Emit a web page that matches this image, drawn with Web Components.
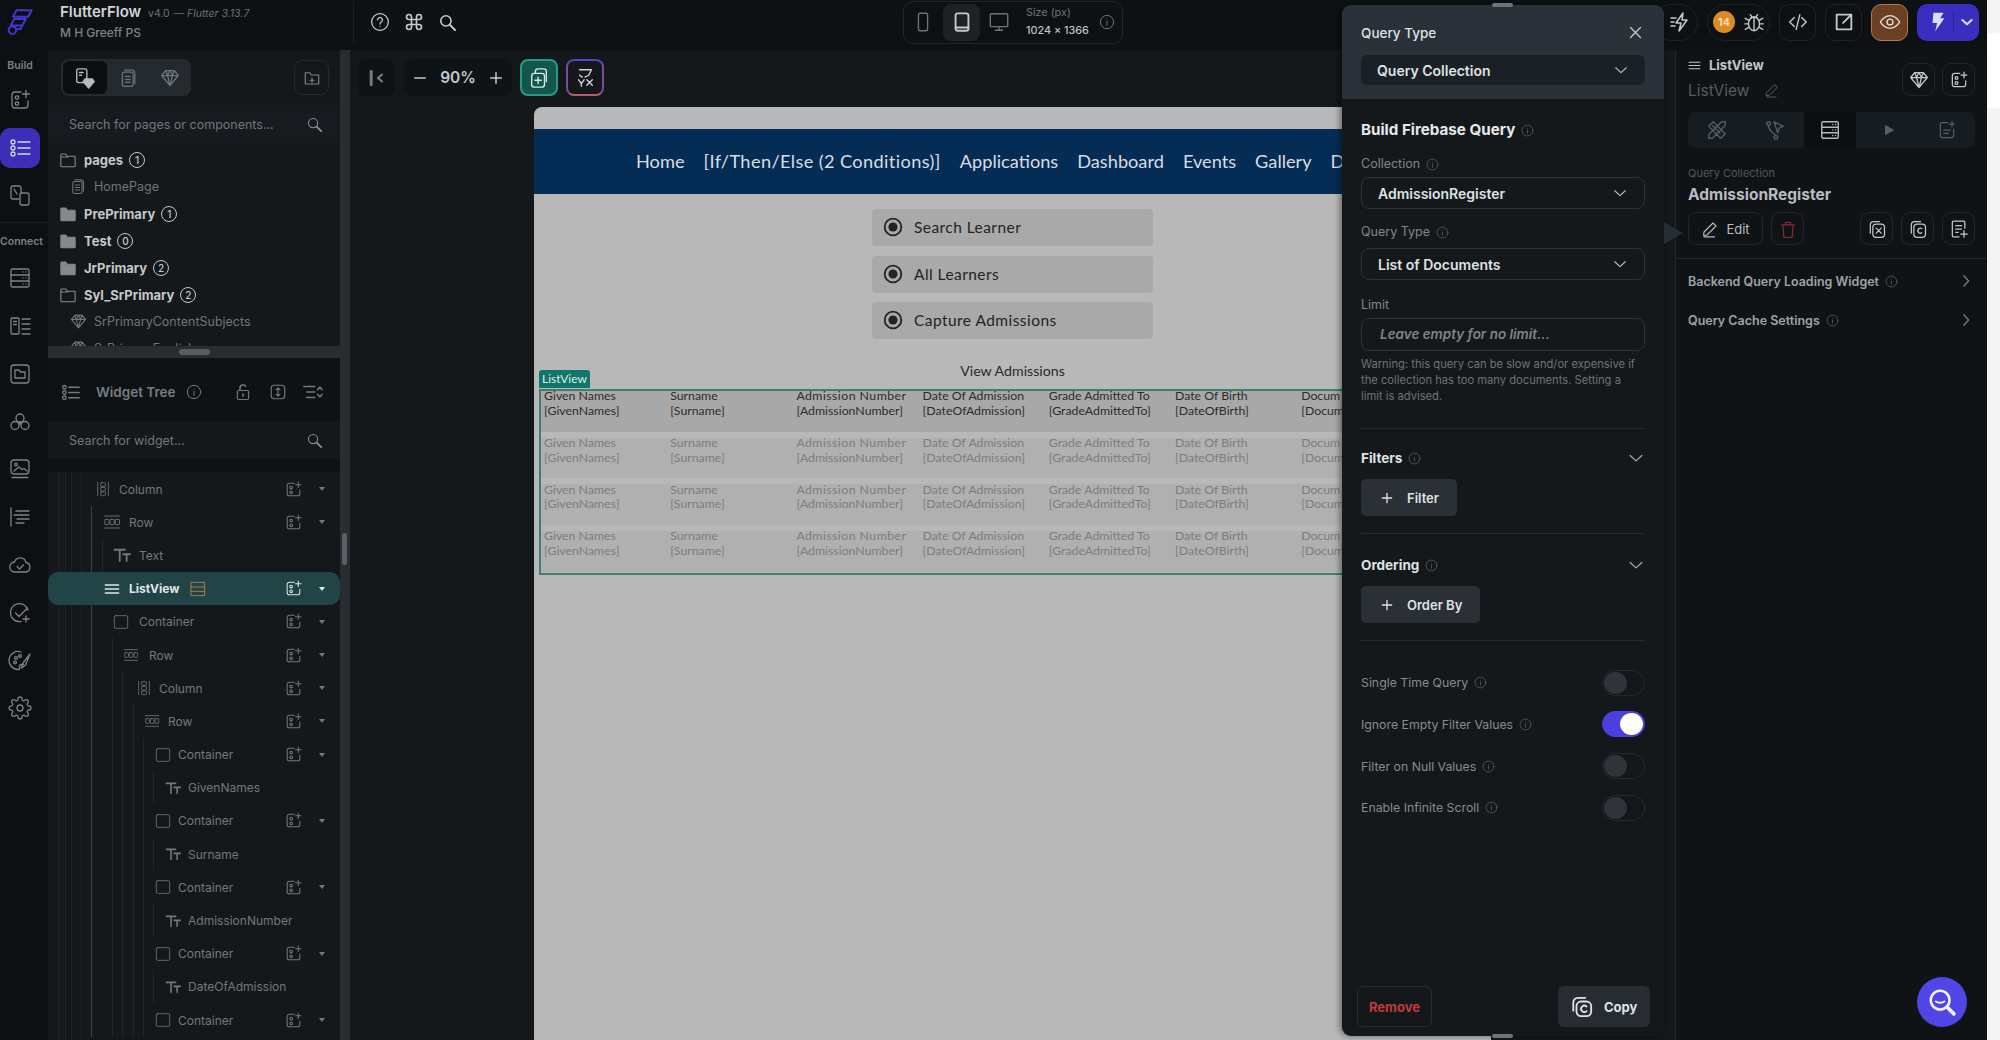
<!DOCTYPE html>
<html>
<head>
<meta charset="utf-8">
<title>FlutterFlow</title>
<style>
  html, body { margin: 0; height: 100%; overflow: hidden; }
  body { display: flex; font-family: "Inter", "Liberation Sans", sans-serif; background: #f4f4f4; }
</style>
</head>
<body>
<ff-app>
  <ff-rail slot="rail"></ff-rail>
  <ff-topbar slot="topbar"></ff-topbar>
  <ff-left slot="left"></ff-left>
  <ff-canvas slot="canvas"></ff-canvas>
  <ff-props slot="props"></ff-props>
  <ff-query slot="overlay"></ff-query>
  <ff-fab slot="overlay"></ff-fab>
</ff-app>
<ff-edge></ff-edge>

<script>
const ICONS = {
  add: '<path d="M13 4H7a3 3 0 0 0-3 3v10a3 3 0 0 0 3 3h10a3 3 0 0 0 3-3v-4"/><circle cx="9" cy="9.5" r="1.7"/><circle cx="9" cy="15.5" r="1.7"/><path d="M18 2.5v7M14.5 6h7"/>',
  list: '<circle cx="5" cy="6" r="2"/><circle cx="5" cy="12" r="2"/><circle cx="5" cy="18" r="2"/><path d="M10 6h12M10 12h12M10 18h12"/>',
  responsive: '<path d="M11 16H5a2 2 0 0 1-2-2V5a2 2 0 0 1 2-2h6a2 2 0 0 1 2 2v5"/><rect x="12" y="10" width="9" height="12" rx="2"/><path d="M6 6l3 5"/>',
  server: '<rect x="3" y="3" width="18" height="18" rx="1.5"/><path d="M3 9h18M3 15h18M15 6h.01M18 6h.01M15 12h.01M18 12h.01M15 18h.01M18 18h.01"/>',
  listpage: '<rect x="3" y="4" width="8" height="16" rx="1"/><path d="M5.500 7.500h3M5.500 10.500h3M14 5h8M14 10h8M14 15h8M14 20h8"/>',
  folderbox: '<rect x="3" y="3" width="18" height="18" rx="3"/><path d="M7 8h4l1.500 2H17v6H7z"/>',
  comps: '<circle cx="12" cy="8" r="4"/><circle cx="7" cy="15.500" r="4"/><circle cx="17" cy="15.500" r="4"/><circle cx="12" cy="13" r="1"/>',
  media: '<rect x="3" y="3" width="18" height="14" rx="3"/><circle cx="8" cy="7.500" r="1.300"/><path d="M6 14l5-4 3 2.500 2-1 3 2.500M4 20.500h16"/>',
  textlines: '<path d="M3 3v18M8 6h13M6 10h15M9 14h12M8 18h8"/>',
  cloud: '<path d="M7 19a5 5 0 0 1-.5-10A6 6 0 0 1 18 9.500a4.800 4.800 0 0 1-.5 9.500z"/><path d="M9 13.500l2.500 2.500 4-4"/>',
  checkplus: '<path d="M20 9A9 9 0 1 0 13 20.500"/><path d="M7.500 12l3.500 3.500 8-8M18 15v6M15 18h6"/>',
  palette: '<path d="M13 3a9 9 0 1 0-3 17.500c2 .2 2-1.500 1.500-2.500s.5-2.500 2-2.500h2"/><circle cx="8" cy="9" r="1.400"/><circle cx="12" cy="7" r="1.400"/><circle cx="7" cy="13.500" r="1.400"/><path d="M22 5l-7 9-1.500 5 4-3z"/>',
  gear: '<circle cx="12" cy="12" r="3"/><path d="M19.4 15a1.65 1.65 0 0 0 .33 1.82l.06.06a2 2 0 0 1 0 2.83 2 2 0 0 1-2.83 0l-.06-.06a1.65 1.65 0 0 0-1.82-.33 1.65 1.65 0 0 0-1 1.51V21a2 2 0 0 1-2 2 2 2 0 0 1-2-2v-.09A1.65 1.65 0 0 0 9 19.4a1.65 1.65 0 0 0-1.82.33l-.06.06a2 2 0 0 1-2.83 0 2 2 0 0 1 0-2.83l.06-.06a1.65 1.65 0 0 0 .33-1.82 1.65 1.65 0 0 0-1.51-1H3a2 2 0 0 1-2-2 2 2 0 0 1 2-2h.09A1.65 1.65 0 0 0 4.6 9a1.65 1.65 0 0 0-.33-1.82l-.06-.06a2 2 0 0 1 0-2.83 2 2 0 0 1 2.83 0l.06.06a1.65 1.65 0 0 0 1.82.33H9a1.65 1.65 0 0 0 1-1.51V3a2 2 0 0 1 2-2 2 2 0 0 1 2 2v.09a1.65 1.65 0 0 0 1 1.51 1.65 1.65 0 0 0 1.82-.33l.06-.06a2 2 0 0 1 2.83 0 2 2 0 0 1 0 2.83l-.06.06a1.65 1.65 0 0 0-.33 1.82V9a1.65 1.65 0 0 0 1.51 1H21a2 2 0 0 1 2 2 2 2 0 0 1-2 2h-.09a1.65 1.65 0 0 0-1.51 1z"/>',
  logo: '<path d="M9 2h13l-3 5.500H6zM7 9.500h10L14 15H4z"/><circle cx="5.500" cy="19" r="3.200"/><path d="M8.500 18h4l1.500-3"/>',
  help: '<circle cx="12" cy="12" r="10"/><path d="M9 9.500a3 3 0 1 1 4.500 2.600c-1 .6-1.500 1.200-1.500 2.400M12 17.500h.01"/>',
  cmd: '<path d="M9 9h6v6H9zM9 9V6a3 3 0 1 0-3 3zM15 9h3a3 3 0 1 0-3-3zM15 15v3a3 3 0 1 0 3-3zM9 15H6a3 3 0 1 0 3 3z"/>',
  search: '<circle cx="10" cy="10" r="6.500"/><path d="M15 15l6.500 6.500" stroke-width="2.500"/>',
  phone: '<rect x="7" y="2.500" width="10" height="19" rx="2"/>',
  tablet: '<rect x="5" y="2.500" width="14" height="19" rx="2.500"/><path d="M5 18h14"/>',
  desktop: '<rect x="2.500" y="3" width="19" height="14" rx="1"/><path d="M12 17v4M8 21h8"/>',
  info: '<circle cx="12" cy="12" r="10"/><path d="M12 11v6M12 7.500h.01"/>',
  collapse: '<path d="M5 4v16" stroke-width="3.500"/><path d="M18 8l-5 4 5 4" stroke-width="2.500"/>',
  minus: '<path d="M5 12h14" stroke-width="2"/>',
  plus: '<path d="M12 5v14M5 12h14" stroke-width="2"/>',
  addpage: '<rect x="4" y="7" width="14" height="15" rx="3"/><path d="M8 7V5a3 3 0 0 1 3-3h6a3 3 0 0 1 3 3v11M11 11v7M7.500 14.500h7"/>',
  aifx: '<path d="M6 3h13l-3 6-4 2M5 14l3 4 3-4M8 18v3M14 14l6 6M20 14l-6 6M6 9l3 2"/>',
  pagedia: '<rect x="3" y="2" width="11" height="15" rx="2"/><path d="M6 6h4M6 9h2"/><path d="M12 13h8l2 3-6 7-6-7z" fill="currentColor"/>',
  pages: '<rect x="4" y="5" width="13" height="17" rx="2.500"/><path d="M7 2.500h8a4 4 0 0 1 4 4v12M7.500 10h6M7.500 13.500h6M7.500 17h6"/>',
  diamond: '<path d="M7 3h10l5 6-10 12L2 9zM2 9h20M9 9l3 12 3-12M7 3l2 6 3-6 3 6 2-6"/>',
  folderadd: '<path d="M3 5h6l2 3h10v12H3zM12 12v6M9 15h6"/>',
  folder: '<path d="M2.500 5a1 1 0 0 1 1-1h5.500l2 3h9.500a1 1 0 0 1 1 1v12a1 1 0 0 1-1 1h-17a1 1 0 0 1-1-1zM2.500 8h9"/>',
  folderfill: '<path d="M2.500 5a1 1 0 0 1 1-1h5.500l2 3h9.500a1 1 0 0 1 1 1v12a1 1 0 0 1-1 1h-17a1 1 0 0 1-1-1z" fill="currentColor"/>',
  lock: '<rect x="4.500" y="10" width="15" height="12" rx="2"/><path d="M8 10V6.500a4 4 0 0 1 7.500-2M12 14.500v3" stroke-width="2"/>',
  expand: '<rect x="3" y="3" width="18" height="18" rx="4"/><path d="M12 6.500v11M9.500 9l2.500-2.500L14.500 9M9.500 15l2.500 2.500 2.500-2.500"/>',
  sortlines: '<path d="M2 6h12M5 12h9M5 18h9M17 9.500l2.500-3 2.500 3M17 14.500l2.500 3 2.500-3"/>',
  row: '<path d="M2 4h20M2 20h20"/><rect x="2.500" y="8.500" width="5.500" height="7" rx="1"/><rect x="9.500" y="8.500" width="5.500" height="7" rx="1"/><rect x="16.500" y="8.500" width="5.500" height="7" rx="1"/>',
  column: '<path d="M4 2v20M20 2v20"/><rect x="8.500" y="2.500" width="7" height="5.500" rx="1"/><rect x="8.500" y="9.500" width="7" height="5.500" rx="1"/><rect x="8.500" y="16.500" width="7" height="5.500" rx="1"/>',
  tt: '<path d="M2 5h14M9 5v15M13.500 11H23M18.200 11v9" stroke-width="2.400"/>',
  box: '<rect x="2" y="2.500" width="20" height="19" rx="2"/>',
  menu: '<path d="M2 6h20M2 12h20M2 18h20" stroke-width="2.200"/>',
  table: '<rect x="2" y="2" width="20" height="20"/><path d="M2 9h20M2 15.500h20"/>',
  close: '<path d="M5 5l14 14M19 5L5 19" stroke-width="1.800"/>',
  chevdown: '<path d="M5 9l7 6.500L19 9"/>',
  chevright: '<path d="M9 5l6.500 7L9 19"/>',
  boldchev: '<path d="M5 9l7 6.500L19 9" stroke-width="3"/>',
  flash: '<path d="M14 3L7 13h5l-2 8 8-11h-5zM2 8h5M2 12h3M2 16h4"/>',
  bug: '<ellipse cx="12" cy="14" rx="6" ry="7.500"/><path d="M12 6.500V21M8 4l2 3M16 4l-2 3M6 10L2.500 8M18 10l3.500-2M6 14H2M18 14h4M6 18l-3.500 2M18 18l3.500 2M9 7h6"/>',
  code: '<path d="M8 7l-5 5 5 5M16 7l5 5-5 5M14 4l-4 16"/>',
  launch: '<path d="M13 4H4v16h16v-9M11 13l9-9M14 4h6v6" stroke-width="2"/>',
  eye: '<path d="M1.500 12S5.500 5 12 5s10.500 7 10.500 7-4 7-10.500 7S1.500 12 1.500 12z"/><circle cx="12" cy="12" r="3.200"/>',
  bolt: '<path d="M7 2h11l-3.500 6H19L9 22l2-9H6z" fill="currentColor" stroke="none"/>',
  pencil: '<path d="M4 16L16 4l4 4L8 20l-4.500.5zM4 22.500h14"/>',
  trash: '<path d="M4 7h16M9 7V4h6v3M6 7l1 15h10l1-15"/>',
  copyx: '<rect x="7" y="6" width="14" height="16" rx="4"/><path d="M4 17V7a4 4 0 0 1 4-4h7M11 11l6 6M17 11l-6 6"/>',
  copyc: '<rect x="7" y="6" width="14" height="16" rx="4"/><path d="M4 17V7a4 4 0 0 1 4-4h7M16.500 11.500a3 3 0 1 0 0 5"/>',
  docadd: '<path d="M19 11V4a1.500 1.500 0 0 0-1.500-1.500h-12A1.500 1.500 0 0 0 4 4v16a1.500 1.500 0 0 0 1.500 1.500H12M8 8h7M8 12h7M8 16h3M18 14v8M14 18h8"/>',
  tools: '<path d="M3 8l5-5 13 13-5 5zM7 7l2 2M10 10l2 2M13 13l2 2M21 3h-4L3 17v4h4L21 7z"/>',
  flow: '<circle cx="5" cy="5" r="2"/><circle cx="13" cy="20" r="2"/><path d="M5 7c0 6 4 7 8 11M11 3l10 5-4.500 2L15 15z"/>',
  play: '<path d="M6 4l14 8-14 8z" fill="currentColor" stroke="none"/>',
  noteadd: '<path d="M13 3H6a2 2 0 0 0-2 2v14a2 2 0 0 0 2 2h12a2 2 0 0 0 2-2v-8M8 12h8M8 16h6M18 2v6M15 5h6"/>',
  copy: '<rect x="6" y="6" width="16" height="16" rx="5" stroke-width="2"/><path d="M2.500 16V7a5 5 0 0 1 5-5h8M17 11.500a3.500 3.500 0 1 0 0 5" stroke-width="2"/>',
  sw: '<circle cx="10.500" cy="10.500" r="7.500" stroke-width="2"/><path d="M16 16l5.500 5.500" stroke-width="3"/><path d="M7 11.500c1.500 1.500 5.500 1.500 7 0"/>',
  radio: '<circle cx="12" cy="12" r="10" stroke-width="2.200"/><circle cx="12" cy="12" r="5.500" fill="currentColor" stroke="none"/>'
};

// --- small pieces --------------------------------------------------------

customElements.define('ff-icon', class FfIcon extends HTMLElement {
  connectedCallback() {
    const size = this.getAttribute('size') || 20;
    const width = this.getAttribute('stroke') || 1.5;
    this.attachShadow({ mode: 'open' }).innerHTML = `
      <style>:host { display: inline-flex; flex: none; width: ${size}px; height: ${size}px; } svg { width: 100%; height: 100%; }</style>
      <svg viewBox="0 0 24 24" fill="none" stroke="currentColor" stroke-width="${width}" stroke-linecap="round" stroke-linejoin="round">${ICONS[this.getAttribute('name')] || ''}</svg>`;
  }
});

customElements.define('ff-edge', class FfEdge extends HTMLElement {
  constructor() {
    super();
    this.attachShadow({ mode: 'open' }).innerHTML = `
      <style>
        :host { display: flex; flex-direction: column; flex: none; width: 13px; height: 1040px; background: #f4f4f4; }
        .a { height: 33px; } .b { height: 5px; background: #fff; } .c { height: 70px; background: #fff; }
      </style>
      <div class="a"></div><div class="b"></div><div class="c"></div>`;
  }
});

customElements.define('ff-app', class FfApp extends HTMLElement {
  constructor() {
    super();
    this.attachShadow({ mode: 'open' }).innerHTML = `
      <style>
        :host {
          display: grid;
          position: relative;
          flex: none;
          width: 1987px;
          height: 1040px;
          overflow: hidden;
          background: #14181b;
          grid-template-columns: 48px 302px 1fr 323px;
          grid-template-rows: 50px 1fr;
        }
        ::slotted([slot=rail]) { grid-row: 1 / 3; grid-column: 1; }
        ::slotted([slot=topbar]) { grid-row: 1; grid-column: 2 / 5; }
        ::slotted([slot=left]) { grid-row: 2; grid-column: 2; }
        ::slotted([slot=canvas]) { grid-row: 2; grid-column: 3; }
        ::slotted([slot=props]) { grid-row: 2; grid-column: 4; }
      </style>
      <slot name="rail"></slot><slot name="topbar"></slot><slot name="left"></slot>
      <slot name="canvas"></slot><slot name="props"></slot><slot name="overlay"></slot>`;
  }
});

customElements.define('ff-rail', class FfRail extends HTMLElement {
  constructor() {
    super();
    const item = (name, on) => `<div class="item"><div class="${on ? 'on' : ''}"><ff-icon name="${name}" size="24" stroke="1.300"></ff-icon></div></div>`;
    this.attachShadow({ mode: 'open' }).innerHTML = `
      <style>
        :host { display: flex; flex-direction: column; align-items: flex-start; background: #0c1013; color: #7d8387; min-height: 0; overflow: hidden; }
        .logo { height: 44px; margin-bottom: 6px; width: 40px; display: flex; align-items: center; justify-content: center; color: #4237c9; }
        .cap { width: 40px; text-align: center; font: 600 10.5px/14px "Inter", sans-serif; color: #7a8085; }
        .build { margin-top: 9px; margin-bottom: 3px; }
        .connect { margin-top: 12px; margin-bottom: 5px; }
        .item { width: 100%; height: 47.8px; display: flex; align-items: center; flex: none; }
        .item > div { width: 40px; height: 40px; display: flex; align-items: center; justify-content: center; border-radius: 10px; }
        .item > div.on { background: #3e2fb8; color: #d6d8dc; }
        hr { width: 100%; margin: 3px 0 0; border: 0; border-top: 1px solid #1b2024; }
      </style>
      <div class="logo"><ff-icon name="logo" size="28" stroke="1.700"></ff-icon></div>
      <div class="cap build">Build</div>
      ${item('add')}${item('list', true)}${item('responsive')}
      <hr>
      <div class="cap connect">Connect</div>
      ${['server', 'listpage', 'folderbox', 'comps', 'media', 'textlines', 'cloud', 'checkplus', 'palette', 'gear'].map(n => item(n)).join('')}`;
  }
});

customElements.define('ff-topbar', class FfTopbar extends HTMLElement {
  constructor() {
    super();
    const btn = (name, cls) => `<div class="btn ${cls || ''}"><ff-icon name="${name}" size="22"></ff-icon></div>`;
    this.attachShadow({ mode: 'open' }).innerHTML = `
      <style>
        :host { display: flex; align-items: center; box-sizing: border-box; padding-bottom: 6px; background: #0d1114; color: #b9bdc1; font-family: "Inter", sans-serif; }
        .brand { width: 306px; box-sizing: border-box; height: 42px; padding-left: 12px; border-right: 1px solid #1a1f23; display: flex; flex-direction: column; justify-content: center; gap: 4px; flex: none; }
        .name { font-size: 15px; line-height: 16px; font-weight: 600; color: #d2d5d8; white-space: nowrap; }
        .name span { font-size: 10.5px; font-weight: 400; color: #6a7075; margin-left: 3px; }
        .name i { font-size: 10.5px; font-weight: 400; color: #6a7075; }
        .org { font-size: 12px; line-height: 14px; font-weight: 500; color: #7d8387; }
        .tools { display: flex; gap: 14px; margin-left: 16px; align-items: center; color: #c6c9cc; flex: none; }
        .device { margin-left: 446px; width: 220px; height: 43px; box-sizing: border-box; border: 1px solid #20262a; border-radius: 10px; display: flex; align-items: center; padding-left: 8px; flex: none; color: #6d7378; }
        .slot { width: 37px; height: 37px; display: flex; align-items: center; justify-content: center; border-radius: 8px; flex: none; }
        .slot.first { width: 22px; margin-right: 9px; }
        .slot.on { background: #1c2226; color: #c9ccce; }
        .slot.last { width: 30px; margin: 0 12px 0 4px; }
        .size { font-size: 10.8px; line-height: 18px; color: #6d7378; white-space: nowrap; }
        .size b { display: block; font-weight: 500; color: #bfc3c6; }
        .info { margin-left: 10px; }
        .right { margin-left: auto; margin-right: 8px; display: flex; align-items: center; gap: 9px; flex: none; }
        .btn { width: 37px; height: 37px; box-sizing: border-box; border: 1px solid #1e2327; border-radius: 10px; display: flex; align-items: center; justify-content: center; color: #c6c9cc; }
        .pill { display: flex; align-items: center; height: 37px; box-sizing: border-box; border: 1px solid #1e2327; border-radius: 19px; color: #c6c9cc; }
        .flash { width: 46px; padding-left: 16px; }
        .debug { width: 63px; padding-left: 5px; gap: 8px; }
        .badge { width: 22px; height: 22px; border-radius: 50%; background: #de8c22; color: #f6e3c2; font-size: 11px; font-weight: 600; display: flex; align-items: center; justify-content: center; flex: none; }
        .eye { background: #6a3f24; border-color: #b07a52; color: #e2e0de; }
        .run { width: 62px; height: 37px; background: #3a2ec0; border-radius: 10px; display: flex; align-items: center; color: #dcdcf5; }
        .run div { width: 36px; display: flex; justify-content: center; border-right: 1px solid #2a2190; }
        .run ff-icon:last-child { margin-left: 5px; }
      </style>
      <div class="brand">
        <div class="name">FlutterFlow <span>v4.0</span> <i>— Flutter 3.13.7</i></div>
        <div class="org">M H Greeff PS</div>
      </div>
      <div class="tools">
        <ff-icon name="help" size="20"></ff-icon><ff-icon name="cmd" size="20" stroke="2"></ff-icon><ff-icon name="search" size="19" stroke="2"></ff-icon>
      </div>
      <div class="device">
        <div class="slot first"><ff-icon name="phone" size="22"></ff-icon></div>
        <div class="slot on"><ff-icon name="tablet" size="22" stroke="2"></ff-icon></div>
        <div class="slot last"><ff-icon name="desktop" size="22"></ff-icon></div>
        <div class="size">Size (px)<b>1024 × 1366</b></div>
        <ff-icon class="info" name="info" size="16"></ff-icon>
      </div>
      <div class="right">
        <div class="pill flash"><ff-icon name="flash" size="24"></ff-icon></div>
        <div class="pill debug"><div class="badge">14</div><ff-icon name="bug" size="22"></ff-icon></div>
        ${btn('code')}${btn('launch')}${btn('eye', 'eye')}
        <div class="run"><div><ff-icon name="bolt" size="22"></ff-icon></div><ff-icon name="boldchev" size="16"></ff-icon></div>
      </div>`;
  }
});

customElements.define('ff-page-row', class FfPageRow extends HTMLElement {
  connectedCallback() {
    const count = this.getAttribute('count');
    const child = this.hasAttribute('child');
    this.attachShadow({ mode: 'open' }).innerHTML = `
      <style>
        :host { display: flex; align-items: center; height: 27px; flex: none; padding-left: ${child ? 22 : 11}px; color: ${child ? '#6f757a' : '#83898d'}; }
        .label { margin-left: 7px; font: ${child ? '400 12.5px' : '700 13px'} "Inter", sans-serif; color: ${child ? '#6f757a' : '#c4c8cb'}; }
        .n { margin-left: 6px; width: 14px; height: 14px; border: 1px solid #c4c8cb; border-radius: 50%; font: 500 10px/14px "Inter", sans-serif; color: #c4c8cb; text-align: center; }
      </style>
      <ff-icon name="${this.getAttribute('icon')}" size="${child ? 17 : 18}"></ff-icon>
      <span class="label">${this.getAttribute('label')}</span>
      ${count !== null ? `<span class="n">${count}</span>` : ''}`;
  }
});

customElements.define('ff-tree-row', class FfTreeRow extends HTMLElement {
  connectedCallback() {
    const x = +this.getAttribute('x');
    const lx = +this.getAttribute('lx');
    const on = this.hasAttribute('selected');
    const lines = (this.getAttribute('lines') || '').split(' ').filter(Boolean).map(Number);
    const bg = lines.map(l => {
      const c = l === 91 ? '#3a4045' : '#20262a';
      return `linear-gradient(${c},${c}) ${l - 48}px 0/1px 100% no-repeat`;
    }).join(',');
    this.attachShadow({ mode: 'open' }).innerHTML = `
      <style>
        :host { display: flex; align-items: center; height: 33.2px; flex: none; box-sizing: border-box; padding-left: ${x - 48}px; color: #72787d; font: 400 12px "Inter", sans-serif; ${bg ? 'background:' + bg + ';' : ''} }
        :host([selected]) { background: #214447; border-radius: 10px; color: #e4e6e8; font-weight: 700; }
        .ic { width: ${lx - x}px; flex: none; display: flex; }
        .label { white-space: nowrap; }
        .table { margin-left: 10px; color: #c98a50; }
        .right { margin-left: auto; display: flex; align-items: center; padding-right: 15px; }
        .caret { margin-left: 16px; width: 0; height: 0; border: 3.5px solid transparent; border-top: 4px solid currentColor; border-bottom: 0; }
      </style>
      <div class="ic"><ff-icon name="${this.getAttribute('icon')}" size="${this.getAttribute('size') || 16}" stroke="1.200"></ff-icon></div>
      <span class="label">${this.getAttribute('label')}</span>
      ${on ? '<ff-icon class="table" name="table" size="16" stroke="1.200"></ff-icon>' : ''}
      ${this.hasAttribute('leaf') ? '' : '<div class="right"><ff-icon name="add" size="19" stroke="1.300"></ff-icon><div class="caret"></div></div>'}`;
  }
});

customElements.define('ff-left', class FfLeft extends HTMLElement {
  constructor() {
    super();
    const pageRows = [
      ['folder', 'pages', 1], ['pages', 'HomePage', null, 1], ['folderfill', 'PrePrimary', 1], ['folderfill', 'Test', 0],
      ['folderfill', 'JrPrimary', 2], ['folder', 'Syl_SrPrimary', 2], ['diamond', 'SrPrimaryContentSubjects', null, 1], ['diamond', 'SrPrimaryEnglish', null, 1]
    ].map(r => `<ff-page-row icon="${r[0]}" label="${r[1]}" ${r[2] !== null && r[2] !== undefined ? `count="${r[2]}"` : ''} ${r[3] ? 'child' : ''}></ff-page-row>`).join('');
    const L = '91 112 122 133 143';
    const cols = [
      ['column', 'Column', 95, 119, ''], ['row', 'Row', 103, 129, '91', 18], ['tt', 'Text', 113, 139, '91 102', 18, 'leaf'],
      ['menu', 'ListView', 104, 129, '', 16, 'selected'], ['box', 'Container', 113, 139, '91'], ['row', 'Row', 123, 149, '91 112'],
      ['column', 'Column', 136, 159, '91 112 122'], ['row', 'Row', 144, 168, '91 112 122 133'], ['box', 'Container', 155, 178, L],
      ['tt', 'GivenNames', 165, 188, L + ' 153', 16, 'leaf'], ['box', 'Container', 155, 178, L],
      ['tt', 'Surname', 165, 188, L + ' 153', 16, 'leaf'], ['box', 'Container', 155, 178, L],
      ['tt', 'AdmissionNumber', 165, 188, L + ' 153', 16, 'leaf'], ['box', 'Container', 155, 178, L],
      ['tt', 'DateOfAdmission', 165, 188, L + ' 153', 16, 'leaf'], ['box', 'Container', 155, 178, L]
    ].map(r => `<ff-tree-row icon="${r[0]}" label="${r[1]}" x="${r[2]}" lx="${r[3]}" lines="${r[4]}" size="${r[5] || 16}" ${r[6] || ''}></ff-tree-row>`).join('');
    this.attachShadow({ mode: 'open' }).innerHTML = `
      <style>
        :host { display: grid; grid-template-columns: 292px 10px; min-height: 0; overflow: hidden; font-family: "Inter", sans-serif; }
        .col { display: flex; flex-direction: column; min-height: 0; overflow: hidden; }
        .bar { background: #272d31; position: relative; }
        .thumb { position: absolute; left: 2px; width: 5px; top: 483px; height: 32px; background: #5a6166; border-radius: 3px; }
        .pages { height: 296px; flex: none; display: flex; flex-direction: column; overflow: hidden; }
        .tabs { display: flex; justify-content: space-between; align-items: center; padding: 9px 11px 0 13px; flex: none; }
        .seg { display: flex; width: 130px; height: 37px; background: #242a2e; border-radius: 8px; box-sizing: border-box; padding: 2px; color: #6d7378; align-items: center; }
        .seg div { width: 44px; height: 33px; display: flex; align-items: center; justify-content: center; border-radius: 6px; flex: none; }
        .seg div:nth-child(3) { width: 38px; }
        .seg .on { background: #0c0f11; color: #b7bbbe; }
        .nf { width: 35px; height: 35px; box-sizing: border-box; border: 1px solid #242a2e; border-radius: 8px; display: flex; align-items: center; justify-content: center; color: #7d8387; }
        .search { height: 38px; flex: none; display: flex; align-items: center; justify-content: space-between; box-sizing: border-box; padding: 0 17px 0 21px; margin-top: 9px; font-size: 12.5px; color: #71777c; background: #171b1f; margin-bottom: 3px; }
        .search ff-icon { color: #8b9196; }
        .hbar { height: 12px; flex: none; background: #272d31; display: flex; justify-content: center; align-items: center; }
        .hbar div { width: 31px; height: 6px; background: #565d62; border-radius: 3px; }
        .wt { height: 63px; flex: none; box-sizing: border-box; padding: 5px 0 0 12px; background: #0e1215; display: flex; align-items: center; color: #73797e; }
        .wt b { margin-left: 15px; font-size: 13.5px; font-weight: 600; color: #777d82; }
        .wt .i { margin-left: 10px; }
        .wt .r { margin-left: auto; display: flex; align-items: center; padding-right: 16px; }
        .wt .r ff-icon:nth-child(2) { margin: 0 15px 0 17px; }
        .gap { height: 13px; flex: none; background: #0e1215; }
        .tree { flex: 1; min-height: 0; overflow: hidden; display: flex; flex-direction: column; padding-top: .5px; background:
          linear-gradient(#1d2226,#1d2226) 11px 0/1px 100% no-repeat, linear-gradient(#1d2226,#1d2226) 17px 0/1px 100% no-repeat,
          linear-gradient(#1d2226,#1d2226) 23px 0/1px 100% no-repeat, linear-gradient(#1d2226,#1d2226) 33px 0/1px 100% no-repeat; }
      </style>
      <div class="col">
        <div class="pages">
          <div class="tabs">
            <div class="seg">
              <div class="on"><ff-icon name="pagedia" size="22"></ff-icon></div>
              <div><ff-icon name="pages" size="20"></ff-icon></div>
              <div><ff-icon name="diamond" size="20"></ff-icon></div>
            </div>
            <div class="nf"><ff-icon name="folderadd" size="18"></ff-icon></div>
          </div>
          <div class="search">Search for pages or components...<ff-icon name="search" size="17"></ff-icon></div>
          ${pageRows}
        </div>
        <div class="hbar"><div></div></div>
        <div class="wt">
          <ff-icon name="list" size="21"></ff-icon><b>Widget Tree</b><ff-icon class="i" name="info" size="16"></ff-icon>
          <div class="r"><ff-icon name="lock" size="18"></ff-icon><ff-icon name="expand" size="18"></ff-icon><ff-icon name="sortlines" size="22"></ff-icon></div>
        </div>
        <div class="search" style="margin:0;background:#14181b">Search for widget...<ff-icon name="search" size="17"></ff-icon></div>
        <div class="gap"></div>
        <div class="tree">${cols}</div>
      </div>
      <div class="bar"><div class="thumb"></div></div>`;
  }
});

customElements.define('ff-canvas', class FfCanvas extends HTMLElement {
  constructor() {
    super();
    this.attachShadow({ mode: 'open' }).innerHTML = `
      <style>
        :host { display: flex; flex-direction: column; min-width: 0; min-height: 0; overflow: hidden; color: #c6c9cc; font-family: "Inter", sans-serif; }
        .tools { height: 57px; flex: none; box-sizing: border-box; padding: 9px 8px 0; display: flex; align-items: flex-start; }
        .b { height: 37px; display: flex; align-items: center; justify-content: center; background: #0f1316; border-radius: 8px; box-sizing: border-box; flex: none; }
        .c { width: 37px; margin-right: 9px; color: #777d82; }
        .z { width: 108px; gap: 11px; margin-right: 8px; font-size: 15.5px; font-weight: 600; }
        .z span { min-width: 36px; text-align: center; }
        .add { width: 38px; background: #12564c; border: 2px solid #279a86; color: #d8e8e4; margin-right: 8px; }
        .ai { width: 38px; background: #14181b; border: 2px solid #7a4b9e; border-top-color: #4f46c8; border-bottom-color: #b45b6d; color: #d0d3d5; }
      </style>
      <div class="tools">
        <div class="b c"><ff-icon name="collapse" size="20"></ff-icon></div>
        <div class="b z"><ff-icon name="minus" size="18"></ff-icon><span>90%</span><ff-icon name="plus" size="18"></ff-icon></div>
        <div class="b add"><ff-icon name="addpage" size="22"></ff-icon></div>
        <div class="b ai"><ff-icon name="aifx" size="22"></ff-icon></div>
      </div>
      <ff-artboard></ff-artboard>`;
  }
});

customElements.define('ff-artboard', class FfArtboard extends HTMLElement {
  constructor() {
    super();
    // the query panel sits over the right of the page, so only the part that shows is written out
    const fields = [['Given Names', 'GivenNames'], ['Surname', 'Surname'], ['<span class="wide">Admission Number</span>', 'AdmissionNumber'], ['Date Of Admission', 'DateOfAdmission'], ['Grade Admitted To', 'GradeAdmittedTo'], ['Date Of Birth', 'DateOfBirth']];
    const row = () => `<div class="row">${fields.map(f => `<div class="cell">${f[0]}<br>[${f[1]}]</div>`).join('')}<div class="cell last">Docum<br>[Docum</div></div>`;
    const radio = t => `<div class="rb"><ff-icon name="radio" size="20"></ff-icon><span>${t}</span></div>`;
    this.attachShadow({ mode: 'open' }).innerHTML = `
      <style>
        :host { display: flex; flex-direction: column; flex: 1; margin-left: 184px; width: 957px; background: #b8b8b8; border-radius: 8px 0 0 0; overflow: hidden; font-family: "Lato", sans-serif; color: #2a2a2a; position: relative; }
        .top { height: 22px; flex: none; }
        nav { height: 65px; flex: none; box-sizing: border-box; padding: 0 0 2px 102px; background: #052c55; display: flex; align-items: center; gap: 19px; color: #d9dee3; font-size: 18.2px; white-space: nowrap; }
        nav .long { letter-spacing: .38px; }
        .rbs { display: flex; flex-direction: column; align-items: center; gap: 9.5px; margin-top: 15px; flex: none; }
        .rb { width: 281px; height: 37px; box-sizing: border-box; padding: 0 0 1px 11px; background: #a9a9a9; border-radius: 4px; display: flex; align-items: center; gap: 11px; font-size: 15.5px; color: #232323; letter-spacing: .45px; }
        .title { height: 20px; line-height: 20px; margin-top: 22px; text-align: center; font-size: 14.2px; flex: none; }
        .listbox { margin: 8px 0 0 5px; height: 186px; box-sizing: border-box; border: 2px solid #3f7f70; border-right: 0; display: flex; flex-direction: column; flex: none; }
        .tag { position: absolute; left: 5px; top: 263px; width: 51px; height: 18px; background: #11766a; color: #dfeeea; font-size: 12px; line-height: 18px; text-align: center; border-radius: 3px 3px 0 0; }
        .row { display: flex; height: 40.7px; flex: none; margin-bottom: 6px; background: #b0b0b0; color: #7d7d7d; box-sizing: border-box; padding-left: 3px; font-size: 12.3px; line-height: 14.8px; white-space: nowrap; }
        .row:first-child { background: #a8a8a8; color: #2c2c2c; }
        .cell { width: 126.2px; flex: none; margin-top: -1.7px; }
        .cell.last { width: 41px; }
        .wide { letter-spacing: .45px; }
      </style>
      <div class="top"></div>
      <nav><span>Home</span><span class="long">[If/Then/Else (2 Conditions)]</span><span>Applications</span><span>Dashboard</span><span>Events</span><span>Gallery</span><span>D</span></nav>
      <div class="rbs">${radio('Search Learner')}${radio('All Learners')}${radio('Capture Admissions')}</div>
      <div class="title">View Admissions</div>
      <div class="listbox">${row()}${row()}${row()}${row()}</div>
      <div class="tag">ListView</div>`;
  }
});

customElements.define('ff-select', class FfSelect extends HTMLElement {
  connectedCallback() {
    this.attachShadow({ mode: 'open' }).innerHTML = `
      <style>
        :host { display: flex; align-items: center; justify-content: space-between; box-sizing: border-box; height: var(--h, 32px); padding: 0 15px 0 16px; border: 1px solid #2c3237; border-radius: 8px; font: 600 14px "Inter", sans-serif; color: #dfe2e4; }
        ff-icon { color: #b9bdc0; }
      </style>
      <span>${this.getAttribute('value')}</span><ff-icon name="chevdown" size="18"></ff-icon>`;
  }
});

customElements.define('ff-info-label', class FfInfoLabel extends HTMLElement {
  connectedCallback() {
    this.attachShadow({ mode: 'open' }).innerHTML = `
      <style>
        :host { display: inline-flex; align-items: center; gap: 6px; }
        ff-icon { color: #585e63; }
      </style>
      <span><slot></slot></span><ff-icon name="info" size="13"></ff-icon>`;
  }
});

customElements.define('ff-toggle-row', class FfToggleRow extends HTMLElement {
  connectedCallback() {
    const on = this.hasAttribute('on');
    this.attachShadow({ mode: 'open' }).innerHTML = `
      <style>
        :host { display: flex; align-items: center; justify-content: space-between; height: 26px; font: 400 12.3px "Inter", sans-serif; color: #858b90; }
        .t { width: 43px; height: 26px; box-sizing: border-box; border-radius: 13px; border: 1px solid ${on ? '#4b3fe0' : '#242a2e'}; background: ${on ? '#4b3fe0' : 'transparent'}; display: flex; align-items: center; padding: 0 1px; justify-content: ${on ? 'flex-end' : 'flex-start'}; }
        .k { width: 23px; height: 22px; border-radius: 50%; background: ${on ? '#fff' : '#2e3439'}; }
      </style>
      <ff-info-label>${this.getAttribute('label')}</ff-info-label><div class="t"><div class="k"></div></div>`;
  }
});

customElements.define('ff-query', class FfQuery extends HTMLElement {
  constructor() {
    super();
    this.attachShadow({ mode: 'open' }).innerHTML = `
      <style>
        :host { position: absolute; left: 1342px; top: 5px; width: 322px; height: 1031px; display: flex; flex-direction: column; background: #14181b; border-radius: 9px; font-family: "Inter", sans-serif; box-shadow: -2px 0 6px rgba(0,0,0,.45); }
        .grip { position: absolute; left: 150px; width: 21px; height: 4px; background: #6d747a; border-radius: 2px; }
        .arrow { position: absolute; right: -19px; top: 217px; width: 0; height: 0; border: 11px solid transparent; border-left: 19px solid #262d33; border-right: 0; }
        .head { height: 94px; box-sizing: border-box; padding: 0 19px; background: #2a3138; border-radius: 9px 9px 0 0; flex: none; }
        .ht { display: flex; justify-content: space-between; align-items: center; height: 49px; box-sizing: border-box; padding-top: 7px; font-size: 13.5px; font-weight: 500; color: #dfe2e4; }
        .ht ff-icon { color: #c6c9cc; margin: -1px 1px 0 0; }
        .head ff-select { --h: 30px; margin-top: 1px; background: #1a2025; border: 0; border-radius: 6px; }
        .body { flex: 1; padding: 0 19px; display: flex; flex-direction: column; min-height: 0; }
        .title { height: 20px; margin-top: 21px; font-size: 15.2px; line-height: 20px; font-weight: 700; color: #e6e8ea; }
        .lab { height: 16px; line-height: 16px; font-size: 12.5px; color: #7f858a; }
        .input { height: 33px; box-sizing: border-box; margin-top: 5px; padding-left: 18px; border: 1px solid #2c3237; border-radius: 8px; font: italic 600 13.5px/31px "Inter", sans-serif; color: #7f858a; }
        .warn { margin-top: 6px; font-size: 11.2px; line-height: 15.8px; color: #6d7378; }
        hr { border: 0; border-top: 1px solid #262b30; margin: 0; height: 0; flex: none; }
        .sec { display: flex; justify-content: space-between; align-items: center; height: 20px; font-size: 13.5px; font-weight: 700; color: #dfe2e4; }
        .sec ff-icon[name=chevdown] { color: #a6abaf; margin-right: -1px; }
        .add { margin-top: 11px; height: 37px; align-self: flex-start; display: flex; align-items: center; gap: 12px; box-sizing: border-box; padding: 0 18px; background: #2a3036; border-radius: 5px; font-size: 13px; font-weight: 600; color: #dfe2e4; }
        .toggles { margin-top: 28.5px; display: flex; flex-direction: column; gap: 15.6px; }
        .foot { margin-top: auto; display: flex; justify-content: space-between; margin-left: -4px; margin-right: -5px; padding-bottom: 9px; }
        .foot div { height: 41px; display: flex; align-items: center; box-sizing: border-box; border-radius: 6px; font-size: 13px; font-weight: 700; }
        .rm { width: 75px; justify-content: center; border: 1px solid #272c31; color: #c6373d; }
        .cp { width: 92px; background: #262c32; color: #dfe2e4; padding-left: 13px; gap: 11px; }
      </style>
      <div class="grip" style="top:-2px"></div>
      <div class="arrow"></div>
      <div class="head">
        <div class="ht"><span>Query Type</span><ff-icon name="close" size="17"></ff-icon></div>
        <ff-select value="Query Collection"></ff-select>
      </div>
      <div class="body">
        <div class="title"><ff-info-label>Build Firebase Query</ff-info-label></div>
        <div class="lab" style="margin-top:16px"><ff-info-label>Collection</ff-info-label></div>
        <ff-select value="AdmissionRegister" style="margin-top:5px"></ff-select>
        <div class="lab" style="margin-top:15px"><ff-info-label>Query Type</ff-info-label></div>
        <ff-select value="List of Documents" style="margin-top:8px"></ff-select>
        <div class="lab" style="margin-top:17px">Limit</div>
        <div class="input">Leave empty for no limit...</div>
        <div class="warn">Warning: this query can be slow and/or expensive if the collection has too many documents. Setting a limit is advised.</div>
        <hr style="margin-top:24px">
        <div class="sec" style="margin-top:19px"><ff-info-label>Filters</ff-info-label><ff-icon name="chevdown" size="20"></ff-icon></div>
        <div class="add"><ff-icon name="plus" size="16"></ff-icon>Filter</div>
        <hr style="margin-top:17px">
        <div class="sec" style="margin-top:21px"><ff-info-label>Ordering</ff-info-label><ff-icon name="chevdown" size="20"></ff-icon></div>
        <div class="add"><ff-icon name="plus" size="16"></ff-icon>Order By</div>
        <hr style="margin-top:17px">
        <div class="toggles">
          <ff-toggle-row label="Single Time Query"></ff-toggle-row>
          <ff-toggle-row label="Ignore Empty Filter Values" on></ff-toggle-row>
          <ff-toggle-row label="Filter on Null Values"></ff-toggle-row>
          <ff-toggle-row label="Enable Infinite Scroll"></ff-toggle-row>
        </div>
        <div class="foot">
          <div class="rm">Remove</div>
          <div class="cp"><ff-icon name="copy" size="22" stroke="1.300"></ff-icon>Copy</div>
        </div>
      </div>
      <div class="grip" style="bottom:-2px"></div>`;
  }
});

customElements.define('ff-props', class FfProps extends HTMLElement {
  constructor() {
    super();
    const sq = (n, c) => `<div class="sq ${c || ''}"><ff-icon name="${n}" size="20"></ff-icon></div>`;
    this.attachShadow({ mode: 'open' }).innerHTML = `
      <style>
        :host { display: flex; flex-direction: column; box-sizing: border-box; margin-left: 11px; padding: 6px 12px 0 12px; background: #0f1316; border-left: 1px solid #23282c; font-family: "Inter", sans-serif; color: #9ea3a7; min-height: 0; overflow: hidden; }
        .head { display: flex; justify-content: space-between; }
        .h1 { display: flex; align-items: center; gap: 8px; height: 18px; font-size: 13px; font-weight: 700; color: #c4c8cb; }
        .h2 { display: flex; align-items: center; gap: 14px; height: 24px; margin-top: 4px; font-size: 15.5px; color: #565c61; }
        .sqs { display: flex; gap: 7px; margin-top: 7px; }
        .sq { width: 33px; height: 33px; box-sizing: border-box; border: 1px solid #20262a; border-radius: 9px; display: flex; align-items: center; justify-content: center; color: #c4c8cb; flex: none; }
        .tabs { display: flex; height: 36px; margin-top: 10px; background: #171c20; border-radius: 8px; align-items: center; color: #575d62; flex: none; }
        .tabs div { display: flex; align-items: center; justify-content: center; height: 36px; flex: none; }
        .tabs .a { width: 58px; }
        .tabs .on { width: 52px; background: #0c0f11; color: #b7bbbe; border-radius: 3px; }
        .tabs .p { width: 65px; } .tabs .n { width: 52px; }
        .qc { margin-top: 18px; font-size: 11px; line-height: 14px; color: #50565b; }
        .an { margin-top: 5px; font-size: 15.5px; line-height: 20px; font-weight: 700; color: #b9bdc0; }
        .acts { display: flex; gap: 8px; margin-top: 7px; align-items: center; }
        .edit { width: 75px; height: 33px; box-sizing: border-box; border: 1px solid #20262a; border-radius: 8px; display: flex; align-items: center; justify-content: center; gap: 7px; font-size: 13px; color: #b9bdc0; }
        .del { color: #7c2a2e; }
        .sp { margin-left: auto; }
        hr { border: 0; border-top: 1px solid #20262a; margin: 13px -12px 0 -12px; }
        .line { display: flex; justify-content: space-between; align-items: center; height: 20px; font-size: 12.5px; font-weight: 600; color: #9ea3a7; }
        .line ff-icon { color: #7d8387; }
      </style>
      <div class="head">
        <div>
          <div class="h1"><ff-icon name="menu" size="13"></ff-icon>ListView</div>
          <div class="h2">ListView<ff-icon name="pencil" size="16"></ff-icon></div>
        </div>
        <div class="sqs">${sq('diamond')}${sq('add')}</div>
      </div>
      <div class="tabs">
        <div class="a"><ff-icon name="tools" size="22"></ff-icon></div>
        <div class="a"><ff-icon name="flow" size="22"></ff-icon></div>
        <div class="on"><ff-icon name="server" size="22"></ff-icon></div>
        <div class="p"><ff-icon name="play" size="16"></ff-icon></div>
        <div class="n"><ff-icon name="noteadd" size="20"></ff-icon></div>
      </div>
      <div class="qc">Query Collection</div>
      <div class="an">AdmissionRegister</div>
      <div class="acts">
        <div class="edit"><ff-icon name="pencil" size="18"></ff-icon>Edit</div>
        ${sq('trash', 'del')}
        ${sq('copyx', 'sp')}${sq('copyc')}${sq('docadd')}
      </div>
      <hr>
      <div class="line" style="margin-top:12px"><ff-info-label>Backend Query Loading Widget</ff-info-label><ff-icon name="chevright" size="18"></ff-icon></div>
      <div class="line" style="margin-top:19px"><ff-info-label>Query Cache Settings</ff-info-label><ff-icon name="chevright" size="18"></ff-icon></div>`;
  }
});

customElements.define('ff-fab', class FfFab extends HTMLElement {
  constructor() {
    super();
    this.attachShadow({ mode: 'open' }).innerHTML = `
      <style>
        :host { position: absolute; left: 1917px; top: 977px; width: 50px; height: 50px; border-radius: 50%; background: #4f46e5; display: flex; align-items: center; justify-content: center; color: #f2f2ff; }
      </style>
      <ff-icon name="sw" size="30"></ff-icon>`;
  }
});
</script>
</body>
</html>
